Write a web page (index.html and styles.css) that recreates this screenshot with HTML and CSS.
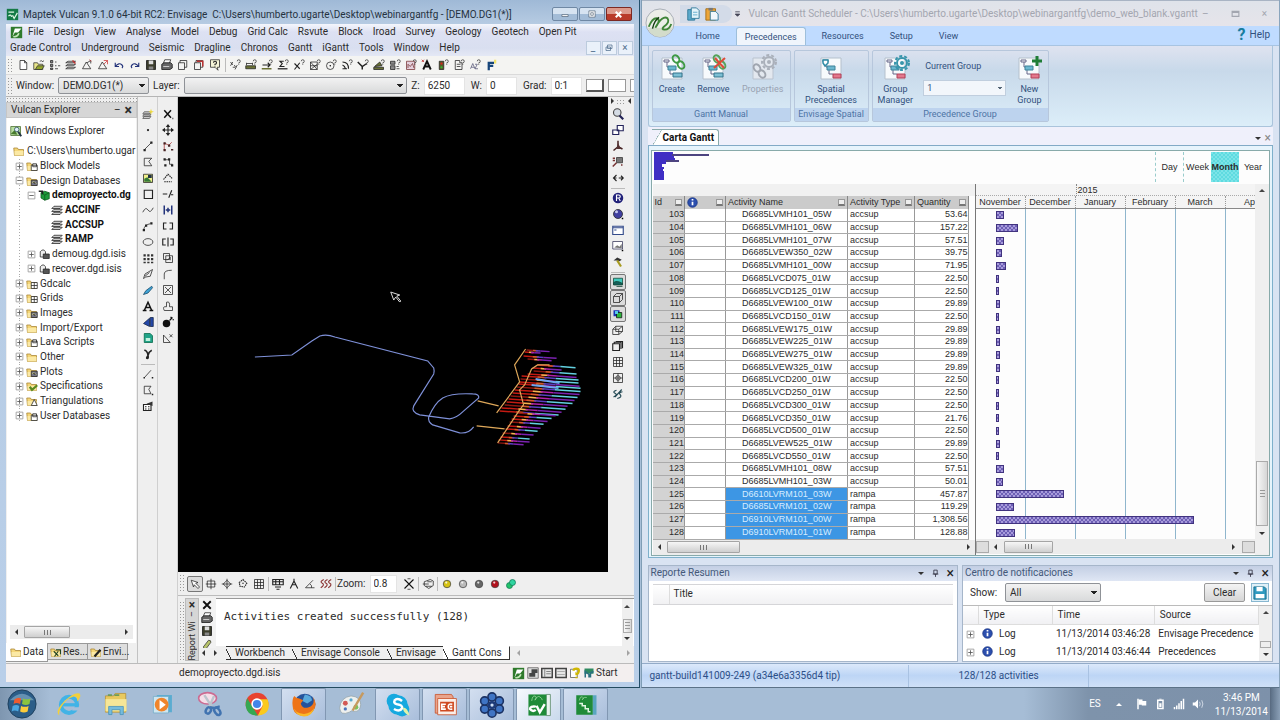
FILE: index.html
```html
<!DOCTYPE html>
<html lang="en">
<head>
  <meta charset="UTF-8">
  <meta name="viewport" content="width=device-width, initial-scale=1.0">
  <title>Vulcan Envisage and Gantt Scheduler</title>
  <link rel="stylesheet" href="styles.css">
</head>
<body>
  <div class="workspace">

    <!-- Envisage -->
    <section class="window envisage">
      <header class="titlebar">
        <i data-icon="vulcan" class="app-icon"></i>
        <span class="title">Maptek Vulcan 9.1.0 64-bit RC2: Envisage&nbsp; C:\Users\humberto.ugarte\Desktop\webinargantfg - [DEMO.DG1(*)]</span>
        <div class="caption">
          <button aria-label="Minimize"><i data-icon="capMin"></i></button>
          <button aria-label="Maximize"><i data-icon="capMax"></i></button>
          <button class="close" aria-label="Close"><i data-icon="capClose"></i></button>
        </div>
      </header>

      <div class="client">
        <nav class="menus">
          <div class="menu-row first">
            <i data-icon="sheet"></i>
            <button>File</button><button>Design</button><button>View</button><button>Analyse</button><button>Model</button><button>Debug</button><button>Grid Calc</button><button>Rsvute</button><button>Block</button><button>Iroad</button><button>Survey</button><button>Geology</button><button>Geotech</button><button>Open Pit</button>
          </div>
          <div class="menu-row">
            <button>Grade Control</button><button>Underground</button><button>Seismic</button><button>Dragline</button><button>Chronos</button><button>Gantt</button><button>iGantt</button><button>Tools</button><button>Window</button><button>Help</button>
            <div class="mdi">
              <button aria-label="Minimize document">_</button>
              <button aria-label="Restore document"><i data-icon="restore"></i></button>
              <button aria-label="Close document">×</button>
            </div>
          </div>
        </nav>

        <div class="toolbar top">
          <span class="grip"></span>
          <div class="tools" data-tools="new open props layers tri triRed undo redo save print copy copyRed help | xyq rule arrowq sumq xq meshq circq arcq branchq slopeq gridq chartq textq lightq noteq azq fq"></div>
        </div>

        <div class="toolbar fields">
          <span class="grip"></span>
          <label for="window-select">Window:</label>
          <select id="window-select" class="drop window-drop"><option>DEMO.DG1(*)</option></select>
          <label for="layer-select">Layer:</label>
          <select id="layer-select" class="drop layer-drop"><option></option></select>
          <label for="z">Z:</label><input id="z" value="6250" class="w-z">
          <label for="w">W:</label><input id="w" value="0" class="w-w">
          <label for="grad">Grad:</label><input id="grad" value="0:1" class="w-g">
          <span class="swatch dark"></span><span class="swatch"></span><span class="swatch cut"></span>
        </div>

        <div class="main">
          <aside class="explorer">
            <div class="dots"></div>
            <h2 class="pane-title">Vulcan Explorer <span>–</span><b>×</b></h2>
            <div class="tree">
              <a class="root" href="#"><i data-icon="explorer"></i>Windows Explorer</a>
              <ul id="tree"></ul>
              <div class="hscroll"><i class="arrow left"></i><span class="thumb"></span><i class="arrow right"></i></div>
            </div>
            <div class="pane-tabs">
              <button class="on"><i data-icon="folder"></i>Data</button>
              <button><i data-icon="folderMap"></i>Res...</button>
              <button><i data-icon="folderPen"></i>Envi...</button>
            </div>
          </aside>

          <div class="rail" data-tools="stack dot line poly image square curve arcs ellipse gridDots feather brush bigA flag3d sheetG gamma | lineDot polyDot form"></div>
          <div class="rail" data-tools="cross move nodeRed nodes nodesDash minusDiv fitH unlink unlinkBar copies corner boxX lasso bomb slopeX"></div>

          <div class="center">
            <div class="view">
              <div class="canvas">
                <svg id="model" viewBox="178 97 430 475" preserveAspectRatio="xMidYMid meet" aria-label="Mine design"></svg>
              </div>
              <div class="side">
                <div class="side-grip"><i class="arrow right"></i><span class="grip-h"></span><i class="arrow left"></i></div>
                <div class="rail" data-tools="zoomI boxes axes redbox swap | regist globe panel panelPic hammer | *terrain *cube *shade cubes stackBox grid3 gridC swirl"></div>
              </div>
            </div>

            <div class="toolbar bottom">
              <span class="grip"></span>
              <div class="tools" data-tools="*pointer snapA snapB snapC grid3 | keys compass angle waves |"></div>
              <label for="zoom">Zoom:</label><input id="zoom" value="0.8" class="w-zoom">
              <div class="tools" data-tools="crossDot | eye | ballY ballW ballG ballR balls"></div>
            </div>

            <div class="report">
              <span class="grip"></span>
              <div class="report-name"><b>×</b><span>Report Wi &nbsp;–</span></div>
              <div class="report-tools" data-tools="crossB print save clip"></div>
              <div class="report-main">
                <div class="console"><pre>Activities created successfully (128)</pre>
                  <div class="vscroll"><i class="arrow up"></i><span class="thumb"></span><i class="arrow down"></i></div>
                </div>
                <div class="sheet-tabs">
                  <i class="arrow left"></i><i class="arrow right"></i>
                  <button>Workbench</button><button>Envisage Console</button><button>Envisage</button><button class="on">Gantt Cons</button>
                  <i class="arrow left faint"></i><i class="arrow right faint last"></i>
                </div>
              </div>
            </div>
          </div>
        </div>

        <footer class="status">
          <span class="file">demoproyecto.dgd.isis</span>
          <div class="tools" data-tools="sheet printer2 panelL panelB helpY start"></div>
          <span>Start</span>
        </footer>
      </div>
    </section>

    <!-- Gantt Scheduler -->
    <section class="window scheduler">
      <header class="titlebar">
        <button class="orb" aria-label="Application menu"><i data-icon="orb"></i></button>
        <div class="quick"><i data-icon="paste"></i><i data-icon="paste2"></i></div>
        <i data-icon="quickMenu" class="quick-menu"></i>
        <span class="title">Vulcan Gantt Scheduler - C:\Users\humberto.ugarte\Desktop\webinargantfg\demo_web_blank.vgantt</span>
        <div class="caption">
          <button aria-label="Minimize">–</button><button aria-label="Maximize"><i data-icon="maxGrey"></i></button><button aria-label="Close">×</button>
        </div>
      </header>
      <nav class="ribbon-tabs">
        <button>Home</button><button class="on">Precedences</button><button>Resources</button><button>Setup</button><button>View</button>
        <a href="#"><b>?</b>Help</a>
      </nav>

      <div class="sched-body">
        <div class="ribbon">
          <div class="group manual">
            <div class="group-items">
              <button><i data-icon="rCreate"></i>Create</button>
              <button><i data-icon="rRemove"></i>Remove</button>
              <button disabled><i data-icon="rProps"></i>Properties</button>
            </div>
            <h3>Gantt Manual</h3>
          </div>
          <div class="group spatial">
            <div class="group-items">
              <button><i data-icon="rSpatial"></i>Spatial<br>Precedences</button>
            </div>
            <h3>Envisage Spatial</h3>
          </div>
          <div class="group prec">
            <div class="group-items">
              <button><i data-icon="rManager"></i>Group<br>Manager</button>
              <div class="current">
                <label for="current-group">Current Group</label>
                <select id="current-group"><option>1</option></select>
              </div>
              <button><i data-icon="rNew"></i>New<br>Group</button>
            </div>
            <h3>Precedence Group</h3>
          </div>
        </div>

        <div class="doc-tabs"><button>Carta Gantt</button><span class="doc-tools"><i class="arrow down"></i><b>×</b></span></div>

        <div class="doc">
          <div class="doc-inner">
            <div class="overview">
              <svg class="mini" viewBox="0 0 60 30" aria-hidden="true">
                <path fill="#3f2fc4" d="M0 0h19v4h1v2h1v2h-5v2h-4v2H8v3h2v2H9v2h1v9H0z"/>
                <path stroke="#4d4480" stroke-width="2" d="M18 3h37M12 9h13"/>
              </svg>
              <div class="scale"><button>Day</button><button>Week</button><button class="on">Month</button><button>Year</button></div>
            </div>
            <div class="gantt">
              <div class="grid-side">
                <div class="grid-gap"></div>
                <table>
                  <thead>
                    <tr><th class="c-id">Id<s></s></th><th class="c-info"><i data-icon="info"></i><s></s></th><th class="c-name">Activity Name<s></s></th><th class="c-type">Activity Type<s></s></th><th>Quantity<s></s></th></tr>
                  </thead>
                  <tbody id="rows"></tbody>
                </table>
                <div class="hscroll"><i class="arrow left"></i><span class="thumb"></span><i class="arrow right"></i></div>
              </div>
              <div class="chart-side">
                <div class="year"><span>2015</span></div>
                <div class="months"><span>November</span><span>December</span><span>January</span><span>February</span><span>March</span><span>Ap</span></div>
                <div class="bars" id="bars"></div>
                <div class="hscroll"><span class="box"></span><i class="arrow left"></i><span class="thumb"></span><i class="arrow right"></i><span class="box"></span></div>
              </div>
              <div class="vscroll"><i class="arrow up"></i><span class="thumb"></span><i class="arrow down"></i></div>
            </div>
          </div>
        </div>

        <div class="docks">
          <section class="dock resumen">
            <h2>Reporte Resumen <span><i class="arrow down"></i><i data-icon="pin"></i><b>×</b></span></h2>
            <div class="list-head"><span></span><span>Title</span></div>
          </section>
          <section class="dock notif">
            <h2>Centro de notificaciones <span><i class="arrow down"></i><i data-icon="pin"></i><b>×</b></span></h2>
            <div class="filter">
              <label for="show">Show:</label>
              <select id="show" class="drop"><option>All</option></select>
              <button class="clear">Clear</button>
              <button class="save" aria-label="Save"><i data-icon="saveBlue"></i></button>
            </div>
            <div class="log">
              <table>
                <thead><tr><th class="l-x"></th><th class="l-type">Type</th><th class="l-time">Time</th><th>Source</th></tr></thead>
                <tbody>
                  <tr><td><i data-icon="plus"></i></td><td><i data-icon="info"></i>Log</td><td>11/13/2014 03:46:28</td><td>Envisage Precedence</td></tr>
                  <tr><td><i data-icon="plus"></i></td><td><i data-icon="info"></i>Log</td><td>11/13/2014 03:46:44</td><td>Precedences</td></tr>
                </tbody>
              </table>
              <div class="vscroll"><i class="arrow up"></i><span class="thumb"></span><i class="arrow down"></i></div>
            </div>
          </section>
        </div>
      </div>

      <footer class="sched-status"><span>gantt-build141009-249 (a34e6a3356d4 tip)</span><span>128/128 activities</span><span></span></footer>
    </section>
  </div>

  <footer class="taskbar">
    <button class="start" aria-label="Start"><i data-icon="win"></i></button>
    <button aria-label="Internet Explorer"><i data-icon="ie"></i></button>
    <button aria-label="Files"><i data-icon="files"></i></button>
    <button aria-label="Media Player"><i data-icon="media"></i></button>
    <button aria-label="Snipping Tool"><i data-icon="snip"></i></button>
    <button aria-label="Chrome"><i data-icon="chrome"></i></button>
    <button class="open" aria-label="Firefox"><i data-icon="firefox"></i></button>
    <button aria-label="Paint"><i data-icon="paint"></i></button>
    <button class="open" aria-label="Skype"><i data-icon="skype"></i></button>
    <button class="open" aria-label="PowerPoint"><i data-icon="ppt"></i></button>
    <button class="open" aria-label="Meeting"><i data-icon="flower"></i></button>
    <button class="open active" aria-label="Vulcan"><i data-icon="vulcanBig"></i></button>
    <button class="open" aria-label="Vulcan Gantt"><i data-icon="ganttBig"></i></button>
    <div class="tray">
      <span>ES</span>
      <i class="arrow up"></i><i data-icon="tFlag"></i><i data-icon="tBattery"></i><i data-icon="tSignal"></i><i data-icon="tSound"></i>
      <time>3:46 PM<br>11/13/2014</time>
      <button class="peek" aria-label="Show desktop"></button>
    </div>
  </footer>

  <script src="script.js"></script>
</body>
</html>
```
FILE: styles.css
```css
* {
  box-sizing: border-box;
}

body {
  margin: 0;
  min-height: 100vh;
  display: flex;
  flex-direction: column;
  background: #a9c0d9;
  color: #2c2c2c;
  font-family: Roboto, "Open Sans", sans-serif;
  font-size: 10px;
  line-height: 14px;
  overflow: hidden;
}

button, input, select {
  font: inherit;
  color: inherit;
  margin: 0;
}

button {
  border: 0;
  padding: 0;
  background: none;
  white-space: nowrap;
}

a {
  color: inherit;
  text-decoration: none;
}

ul, h2, h3, pre {
  margin: 0;
  padding: 0;
  font-weight: normal;
  font-size: 10px;
}

i[data-icon], .tool {
  display: block;
  flex: none;
}

svg {
  display: block;
}

.workspace {
  flex: 1;
  display: grid;
  grid-template-columns: minmax(0, 1fr) minmax(0, 1fr);
  gap: 1px;
}

.window {
  display: flex;
  flex-direction: column;
}

.titlebar {
  display: flex;
  align-items: center;
}

.title {
  white-space: nowrap;
  flex: 1;
  min-width: 0;
}

/* arrows used by scroll bars, drop downs and handles */
.arrow {
  width: 0;
  height: 0;
  flex: none;
  border: 3px solid transparent;
}

.arrow.left { border-right-color: #333; border-left-width: 0; }
.arrow.right { border-left-color: #333; border-right-width: 0; }
.arrow.up { border-bottom-color: #444; border-top-width: 0; }
.arrow.down { border-top-color: #333; border-bottom-width: 0; }
.arrow.faint { opacity: .4; }

.drop {
  appearance: none;
  height: 17px;
  padding: 0 4px;
  border: 1px solid #8f9297;
  border-radius: 2px;
  background:
    linear-gradient(to bottom left, #222 50%, transparent 51%) right 6px center / 3px 3px no-repeat,
    linear-gradient(to bottom right, #222 50%, transparent 51%) right 3px center / 3px 3px no-repeat,
    linear-gradient(#f2f2f2, #d9dadb);
}

/* ---------- Envisage ---------- */

.envisage {
  padding: 0 5px 5px 6px;
  border-right: 1px solid #24506c;
  border-bottom: 1px solid #234a5e;
  background: linear-gradient(#9fb9d6, #b6cbe2 24px, #b9cfe9);
}

.envisage .titlebar {
  height: 24px;
  color: #26323f;
  padding-top: 5px;
}

.app-icon {
  margin-right: 4px;
}

.caption {
  display: flex;
}

.envisage .caption {
  gap: 1px;
  align-self: flex-start;
  margin: 2px 2px 0 0;
}

.envisage .caption button {
  width: 26px;
  height: 14px;
  display: grid;
  place-items: center;
  border: 1px solid #6f88a4;
  border-radius: 2px;
  background: linear-gradient(#d6e3f1 48%, #a3bcd7 52%);
}

.envisage .caption .close {
  border-color: #7c2a24;
  background: linear-gradient(#dc9a8d 48%, #b93a2a 52%);
}

.client {
  flex: 1;
  display: flex;
  flex-direction: column;
  background: #efefef;
}

.menus {
  background: linear-gradient(#f4f6fc, #dde1f3 8px, #d9dff0 24px, #e4e8f5);
}

.menu-row {
  display: flex;
  align-items: center;
  gap: 10px;
  height: 16px;
  padding-left: 4px;
}

.menu-row.first i {
  margin-right: -5px;
}

.mdi {
  display: flex;
  gap: 1px;
  margin: 0 1px 0 auto;
}

.mdi button {
  width: 15px;
  height: 14px;
  line-height: 10px;
  display: grid;
  place-items: center;
  border: 1px solid #bccbdd;
  background: #eaf1fa;
  color: #53708f;
}

.toolbar {
  display: flex;
  align-items: center;
  background: #efefef;
}

.tools {
  display: flex;
  align-items: center;
}

.tool {
  width: 16px;
  height: 16px;
  display: grid;
  place-items: center;
}

.tool.pressed {
  border: 1px solid #777;
  border-radius: 2px;
  background: #dcdcdc;
}

.sep {
  width: 1px;
  height: 14px;
  margin: 0 1px 0 2px;
  background: #bbb;
}

.grip {
  width: 5px;
  align-self: stretch;
  margin: 2px 4px 2px 1px;
  background: radial-gradient(circle, #999 1px, transparent 1px) 0 0 / 3px 3px;
}

.toolbar.top {
  height: 18px;
  background: #f4f4f2;
}

.toolbar.top .grip {
  margin-right: 3px;
}

.toolbar.fields {
  height: 23px;
  border-top: 1px solid #dadada;
  border-bottom: 1px solid #b5b5b5;
  gap: 4px;
}

.toolbar.fields .grip {
  margin-right: 0;
}

.toolbar input {
  height: 18px;
  border: 1px solid #e4e4e4;
  background: #fff;
  padding: 0 3px;
  min-width: 0;
}

.window-drop { width: 91px; }
.layer-drop { flex: 1; min-width: 0; }
.w-z { width: 41px; margin-right: 2px; }
.w-w { width: 31px; margin-right: 2px; }
.w-g { width: 31px; }
.w-zoom { width: 27px; margin: 0 4px; }

.swatch {
  width: 18px;
  height: 13px;
  background: #fff;
  border: 1px solid #999;
}

.swatch.dark {
  border-right: 2px solid #555;
  border-bottom: 2px solid #555;
}

.swatch.cut {
  width: 4px;
  border-right: 0;
}

.main {
  flex: 1;
  display: flex;
}

.explorer {
  width: 132px;
  display: flex;
  flex-direction: column;
  border-right: 1px solid #c2c2c2;
}

.dots, .grip-h {
  height: 5px;
  background: radial-gradient(circle, #999 1px, transparent 1px) 0 0 / 3px 3px;
}

.pane-title {
  display: flex;
  gap: 4px;
  height: 16px;
  padding: 0 4px;
  background: #d6d6d6;
  border: 1px solid #c6c6c6;
}

.pane-title span {
  margin-left: auto;
}

.pane-title b {
  font-size: 14px;
}

.tree {
  flex: 1;
  display: flex;
  flex-direction: column;
  margin: 0 1px;
  background: #fff;
  padding: 5px 3px 0;
  overflow: hidden;
}

.root {
  display: flex;
  gap: 3px;
  align-items: center;
  height: 16px;
  margin-bottom: 5px;
}

.tree ul {
  height: 279px;
  display: flex;
  flex-direction: column;
  list-style: none;
}

.tree li {
  flex: 1 1 0;
  display: flex;
  align-items: center;
  gap: 2px;
  white-space: nowrap;
  background: repeating-linear-gradient(#aaa 0 1px, transparent 1px 3px) 9px 0 / 1px 100% no-repeat;
}

.tree li:first-child {
  background: none;
  padding-left: 3px;
}

.tree .d1 { padding-left: 5px; }
.tree .d2 { padding-left: 17px; }
.tree .d3 { padding-left: 41px; }
.tree .strong { font-weight: bold; color: #111; }

.hscroll {
  display: flex;
  align-items: center;
  height: 14px;
  background: #ececec;
  padding: 0 5px;
}

.hscroll .thumb {
  height: 12px;
  border: 1px solid #a5a5a5;
  border-radius: 1px;
  background:
    repeating-linear-gradient(90deg, #777 0 1px, transparent 1px 3px) center / 7px 5px no-repeat,
    linear-gradient(#f6f6f6, #cfcfcf);
}

.tree .hscroll { margin: auto 0 4px; }
.tree .thumb { width: 46px; margin-left: 6px; }
.hscroll > .arrow.right { margin-left: auto; }

.pane-tabs {
  display: flex;
  align-items: flex-start;
  height: 20px;
}

.pane-tabs button {
  height: 17px;
  display: flex;
  gap: 1px;
  align-items: center;
  width: 40px;
  padding-left: 2px;
  border: 1px solid #999;
  border-width: 1px 1px 1px 0;
  background: #dedede;
}

.pane-tabs .on {
  height: 19px;
  width: 42px;
  padding-left: 4px;
  border-top: 0;
  background: #fff;
}

.rail {
  width: 20px;
  padding: 9px 0 0 1px;
  display: flex;
  flex-direction: column;
  align-items: center;
  border-right: 1px solid #cfcfcf;
}

.rail .sep {
  width: 14px;
  height: 1px;
  margin: 2px 0 1px;
}

.center {
  flex: 1;
  min-width: 0;
  display: flex;
  flex-direction: column;
}

.view {
  flex: 1;
  display: flex;
}

.canvas {
  flex: 1;
  min-width: 0;
  background: #000;
  display: flex;
}

.canvas svg {
  width: 100%;
}

.side {
  width: 26px;
}

.side-grip {
  height: 8px;
  display: flex;
  align-items: center;
  gap: 2px;
  padding: 0 3px;
}

.side-grip .grip-h {
  flex: 1;
}

.side .rail {
  padding: 1px 0 0;
  border: 0;
}

.toolbar.bottom {
  height: 24px;
  padding-left: 0;
  border-bottom: 1px solid #bbb;
}

.toolbar.bottom .grip {
  margin-right: 3px;
}

.toolbar.bottom .sep {
  margin: 0 1px;
}

.report {
  height: 67px;
  display: flex;
  padding: 2px 0 2px;
}

.report .grip {
  margin: 3px 1px 0 1px;
}

.report-name {
  width: 14px;
  display: flex;
  flex-direction: column;
  align-items: center;
  background: #d6d6d6;
  border: 1px solid #bbb;
}

.report-name b {
  font-size: 12px;
  line-height: 12px;
}

.report-name span {
  writing-mode: vertical-rl;
  transform: rotate(180deg);
  white-space: nowrap;
  font-size: 9px;
}

.report-tools {
  width: 17px;
  height: 50px;
  overflow: hidden;
  background: #f2f2f2;
}

.report-tools .tool {
  height: 13px;
}

.report-main {
  flex: 1;
  min-width: 0;
}

.console {
  height: 48px;
  display: flex;
  background: #fff;
  border-top: 1px solid #999;
}

.console pre {
  flex: 1;
  padding: 10px 8px;
  font: 11px/16px "DejaVu Sans Mono", "Liberation Mono", monospace;
}

.vscroll {
  display: flex;
  flex-direction: column;
  align-items: center;
  background: #efefef;
}

.vscroll .thumb {
  border: 1px solid #aaa;
  background:
    repeating-linear-gradient(#999 0 1px, transparent 1px 3px) center / 5px 7px no-repeat,
    linear-gradient(90deg, #f7f7f7, #d6d6d6);
}

.console .vscroll {
  width: 11px;
  margin-right: 1px;
  padding: 6px 0;
  justify-content: space-between;
}

.console .thumb {
  width: 9px;
  height: 14px;
  margin-top: 6px;
}

.sheet-tabs {
  display: flex;
  align-items: center;
  height: 14px;
  margin-left: -14px;
}

.sheet-tabs > .arrow {
  margin-right: 9px;
}

.sheet-tabs button {
  height: 14px;
  padding: 0 7px 0 9px;
  line-height: 12px;
  border-top: 1px solid #333;
  border-bottom: 1px solid #333;
  background: linear-gradient(64deg, transparent 4px, #333 4px, #333 5px, transparent 5px);
}

.sheet-tabs .on {
  border-top-color: #fff;
  border-right: 1px solid #333;
  background-color: #fff;
}

.sheet-tabs .faint { margin-left: 7px; }
.sheet-tabs .last { margin: 0 4px 0 auto; }

.status {
  display: flex;
  align-items: center;
  height: 19px;
  padding: 0 16px 0 173px;
  border-top: 1px solid #bbb;
  background: #f3efef;
}

.status .file {
  flex: 1;
}

.status .tool {
  width: 14px;
}

/* ---------- Gantt Scheduler ---------- */

.scheduler {
  background: #d9e3f2;
  border-left: 1px solid #7f9db5;
  border-right: 1px solid #8aa5bd;
  border-bottom: 1px solid #5b7288;
  color: #31507d;
}

.scheduler .titlebar {
  height: 26px;
  background: linear-gradient(#dfe3ea, #e6e4ea);
  border-top: 1px solid #a9b4c4;
  color: #a3a6b0;
}

.orb {
  width: 38px;
  height: 26px;
  padding-left: 3px;
  z-index: 1;
}

.orb i {
  margin-top: 7px;
}

.quick {
  display: flex;
  align-items: center;
  gap: 5px;
  height: 18px;
  width: 52px;
  padding-left: 6px;
  border-radius: 0 9px 9px 0;
  background: #d3dbe8;
}

.quick-menu {
  margin: 0 7px 0 1px;
}

.scheduler .title {
  min-width: 0;
}

.scheduler .caption {
  gap: 22px;
  padding-right: 12px;
}

.ribbon-tabs {
  height: 20px;
  display: flex;
  align-items: flex-end;
  padding: 0 9px 0 41px;
  background: #bfdbff;
  border-bottom: 1px solid #a8c4e2;
}

.ribbon-tabs button {
  height: 18px;
  padding: 0 13px;
  font-size: 9px;
}

.ribbon-tabs .on {
  padding: 0 8px;
  border: 1px solid #9ebfdb;
  border-bottom: 0;
  border-radius: 3px 3px 0 0;
  background: #f0f5fc;
  margin: 0 3px;
}

.ribbon-tabs a {
  margin-left: auto;
  display: flex;
  align-items: center;
  gap: 4px;
  height: 20px;
}

.ribbon-tabs b {
  color: #187d9e;
  font-size: 16px;
}

.sched-body {
  flex: 1;
  display: flex;
  flex-direction: column;
  padding: 0 6px;
}

.ribbon {
  height: 81px;
  display: flex;
  gap: 3px;
  padding: 4px 3px;
  border: 1px solid #aac4dc;
  border-top: 0;
  border-radius: 0 0 3px 3px;
  background: linear-gradient(#dfe3f0, #c8d9ea 25px, #dceef9);
  font-size: 9px;
}

.group {
  display: flex;
  flex-direction: column;
  border: 1px solid #b7c7dc;
  border-radius: 2px;
}

.manual { width: 139px; }
.spatial { width: 75px; }
.prec { width: 177px; }

.group-items {
  flex: 1;
  display: flex;
  padding: 4px 0 0;
  justify-content: space-around;
}

.group button {
  display: flex;
  flex-direction: column;
  align-items: center;
  line-height: 11px;
  height: 52px;
  text-align: center;
}

.group button i {
  margin-bottom: 3px;
}

.group button:disabled {
  color: #99a3b2;
}

.group h3 {
  height: 13px;
  font-size: 9px;
  line-height: 12px;
  text-align: center;
  white-space: nowrap;
  background: #bdd3ee;
  color: #4e74a5;
}

.current {
  display: flex;
  flex-direction: column;
  gap: 7px;
  padding-top: 4px;
  color: #31507d;
}

.current label {
  padding-left: 2px;
}

.current select {
  appearance: none;
  width: 83px;
  height: 16px;
  padding: 0 3px;
  border: 1px solid #c0cede;
  background:
    linear-gradient(to bottom left, #567 50%, transparent 51%) right 5px center / 2px 2px no-repeat,
    linear-gradient(to bottom right, #567 50%, transparent 51%) right 3px center / 2px 2px no-repeat,
    #f2f6fb;
}

.doc-tabs {
  display: flex;
  align-items: flex-end;
  height: 19px;
  background: #eff0fb;
  border-bottom: 1px solid #82aac6;
}

.doc-tabs button {
  height: 16px;
  margin-left: 4px;
  padding: 0 4px 0 11px;
  border-right: 1px solid #8aa;
  border-top: 1px solid #8aa;
  border-radius: 0 3px 0 0;
  background: linear-gradient(120deg, transparent 8px, #8aa 8px, #fff 9px);
  color: #111;
  font-weight: bold;
}

.doc-tools {
  margin-left: auto;
  display: flex;
  align-items: center;
  gap: 4px;
  padding-right: 2px;
}

.doc-tools b {
  color: #888;
  font-size: 12px;
  font-weight: normal;
}

.doc {
  border: 1px solid #7fb0cb;
  border-top: 0;
  background: #e7f4fc;
  padding: 4px 2px 1px;
}

.doc-inner {
  border: 1px solid #8aa;
  background: #fdfdfd;
  padding-left: 1px;
  font: 9px/12px "Liberation Sans", Arial, sans-serif;
  color: #2c2c2c;
}

.overview {
  display: flex;
  justify-content: space-between;
  height: 33px;
}

.mini {
  width: 60px;
  height: 30px;
  margin: 1px 0 0 1px;
}

.scale {
  display: flex;
  padding: 1px 2px 2px 0;
}

.scale button {
  width: 28px;
  border-left: 1px dashed #9cc;
}

.scale .on {
  font-weight: bold;
  border: 0;
  background: repeating-conic-gradient(#5fdbe0 0 25%, #7ce4e8 0 50%) 0 0 / 4px 4px;
}

.scale button:last-child {
  border: 0;
}

.gantt {
  display: flex;
}

.grid-side {
  width: 322px;
}

.grid-gap {
  height: 12px;
  background: #f1f1f1;
}

.grid-side table {
  width: 316px;
  border-collapse: collapse;
  table-layout: fixed;
}

.grid-side th {
  height: 13px;
  padding: 0 2px;
  font-weight: normal;
  text-align: left;
  white-space: nowrap;
  background: #cbcbcb;
  border-right: 1px solid #888;
  line-height: 11px;
}

.grid-side th s {
  float: right;
  width: 7px;
  height: 7px;
  margin-top: 2px;
  border: 1px solid #999;
  border-bottom: 2px solid #777;
  background: #eee;
}

.grid-side th i {
  float: left;
}

.c-id { width: 32px; }
.c-info { width: 41px; }
.c-name { width: 122px; }
.c-type { width: 67px; }

#rows {
  height: 330px;
}

#rows td {
  padding: 0 2px;
  line-height: 11px;
  border-right: 1px solid #999;
  border-bottom: 1px solid #aaa;
  white-space: nowrap;
  background: #fff;
}

#rows td:first-child {
  text-align: right;
  background: #d3d3d3;
  padding: 0;
}

#rows td:nth-child(3) {
  padding-left: 16px;
}

#rows td:last-child {
  text-align: right;
  padding: 0;
}

#rows .picked td:nth-child(3) {
  background: #3d96e4;
  color: #d7ecff;
}

.gantt .hscroll {
  height: 15px;
}

.grid-side .thumb {
  width: 73px;
  margin-left: 6px;
}

.chart-side {
  flex: 1;
  min-width: 0;
  border-left: 1px solid #777;
}

.year {
  height: 12px;
  background: #f4f4f4;
  border-bottom: 1px dotted #aaa;
}

.year span {
  display: block;
  margin-left: 100px;
  border-left: 1px dotted #888;
  padding-left: 1px;
}

.months {
  display: flex;
  height: 13px;
  overflow: hidden;
  background: #f4f4f4;
  border-bottom: 1px solid #888;
}

.months span {
  flex: 0 0 50px;
  text-align: center;
  border-right: 1px dotted #999;
}

.months span:last-child {
  flex: 1;
  min-width: 0;
  text-align: right;
  border: 0;
}

.bars {
  height: 330px;
  display: flex;
  flex-direction: column;
  padding-left: 20px;
  background: repeating-linear-gradient(90deg, transparent 0 49px, #8fb6cd 49px 50px);
}

.bars span {
  flex: 1 1 0;
  display: flex;
  align-items: center;
}

.bars b {
  height: 8px;
  border: 1px solid #41337f;
  background: repeating-conic-gradient(#6d5fb5 0 25%, #a79bdb 0 50%) 0 0 / 4px 4px;
}

.chart-side .hscroll {
  padding: 0;
}

.chart-side .box {
  width: 13px;
  height: 12px;
  border: 1px solid #aaa;
  background: #ddd;
}

.chart-side .box:last-child { margin-left: 7px; }
.chart-side .box + .arrow { margin-left: 5px; }
.chart-side .thumb { width: 49px; margin-left: 7px; }

.gantt > .vscroll {
  width: 14px;
  padding: 5px 0 20px;
}

.gantt > .vscroll .thumb {
  width: 12px;
  height: 65px;
  margin-top: auto;
  margin-bottom: 6px;
}

.docks {
  flex: 1;
  display: flex;
  gap: 4px;
  padding: 7px 0 1px;
  color: #2c2c2c;
}

.dock {
  background: #fff;
  border: 1px solid #a6b6ca;
}

.resumen {
  flex: 1;
}

.notif {
  width: 311px;
}

.dock h2 {
  height: 15px;
  display: flex;
  justify-content: space-between;
  padding: 0 3px 0 2px;
  background: linear-gradient(#c3cfe4, #dfe6f4);
  color: #44597a;
}

.dock h2 span {
  display: flex;
  align-items: center;
  gap: 7px;
}

.dock h2 b {
  font-size: 14px;
  font-weight: normal;
  color: #222;
}

.list-head {
  display: flex;
  height: 21px;
  margin: 3px 4px 0;
  border: 1px solid #d5d5d8;
  border-width: 1px 0;
  background: linear-gradient(#fff, #f1f1f3);
  line-height: 18px;
}

.list-head span:first-child {
  width: 17px;
  border-right: 1px solid #ddd;
}

.list-head span:last-child {
  padding-left: 4px;
}

.filter {
  display: flex;
  align-items: center;
  height: 24px;
  padding: 0 3px 0 7px;
}

.filter .drop {
  width: 96px;
  height: 19px;
  margin-left: 8px;
}

.clear {
  width: 41px;
  height: 19px;
  margin: 0 6px 0 auto;
  border: 1px solid #999;
  border-radius: 2px;
  background: linear-gradient(#f4f4f4, #d6d6d6);
}

.filter .save {
  width: 18px;
  height: 19px;
  display: grid;
  place-items: center;
  border: 1px solid #88b7d0;
  background: #dff0f8;
}

.log {
  display: flex;
  border-top: 1px solid #bbb;
}

.log table {
  flex: 1;
  border-collapse: collapse;
  table-layout: fixed;
}

.log th {
  height: 19px;
  padding: 0 5px;
  font-weight: normal;
  text-align: left;
  border-right: 1px solid #ddd;
  border-bottom: 1px solid #ddd;
  background: linear-gradient(#fff, #f0f0f3);
}

.log td {
  height: 18px;
  padding: 0 4px;
  white-space: nowrap;
}

.log td i {
  float: left;
}

.log td svg {
  margin-top: 1px;
}

.log td:nth-child(1) {
  padding: 0 3px;
}

.log td:nth-child(2) i {
  margin-right: 6px;
}

.l-x { width: 14px; }
.l-type { width: 74px; }
.l-time { width: 98px; }

.log .vscroll {
  width: 13px;
  padding: 5px 0;
}

.log .thumb {
  width: 11px;
  height: 7px;
  margin: auto 0 5px;
  background: #eee;
}

.sched-status {
  height: 24px;
  display: flex;
  align-items: center;
  border-top: 1px solid #93abc8;
  background: linear-gradient(#dce9fb, #bdd5f5 50%, #cfe0f7);
  color: #2d4f87;
}

.sched-status span {
  height: 22px;
  line-height: 22px;
  padding-left: 8px;
  border-right: 1px solid #a9c2e2;
}

.sched-status span:first-child { width: 267px; }
.sched-status span:nth-child(2) { width: 180px; padding-left: 50px; }
.sched-status span:last-child { border: 0; }

/* ---------- Taskbar ---------- */

.taskbar {
  height: 32px;
  display: flex;
  gap: 2px;
  background: linear-gradient(90deg, #7e96b0, #a6bdd6 50px, #a6bdd6 80%, #7e93ab 85%, #7d91aa);
}

.taskbar > button {
  width: 45px;
  display: grid;
  place-items: center;
}

.taskbar .start {
  width: 44px;
}

.taskbar .open {
  border: 1px solid #8197b2;
  border-bottom: 0;
  border-radius: 2px 2px 0 0;
  background: linear-gradient(135deg, #d3dff0, #a9bedb);
}

.taskbar .active {
  background: linear-gradient(135deg, #f6f9fd, #c9d9ec);
}

.tray {
  margin-left: auto;
  display: flex;
  align-items: center;
  gap: 7px;
  color: #fff;
}

.tray span {
  margin-right: 8px;
}

.tray .arrow.up {
  border-bottom-color: #fff;
  margin-right: 6px;
}

.tray time {
  margin-left: 4px;
  text-align: center;
  padding-top: 2px;
}

.peek {
  align-self: stretch;
  width: 10px;
  margin-left: -5px;
  border-left: 1px solid #5a6c82;
  background: linear-gradient(90deg, #5d7188, #8a9fb6);
}
```
FILE: script.js
```js
// icons are drawn on a 16 x 16 box unless a size is given: [width, height, viewBox side, markup]
const K = 'stroke="#222" fill="none"';
const q = '<path stroke="#333" fill="none" d="M11 3q0-2 2-2t2 2-2 2v1M13 7v1"/>';
const folder = '<path d="M1 4h5l1 2h7v8H2z" fill="#f5d779" stroke="#a58230"/><path d="M2 8h12v6H2z" fill="#fbe9a5"/>';
const tree = '<path d="M3 3h20v21H3z" fill="#f7fafc" stroke="#b5c0cc"/><path d="M5 5h5v2H5zM8 7v5h3M11 12v7h4" stroke="#668" fill="none"/><path d="M9 11h8v4H9z" fill="#6bb7cf" stroke="#3c8299"/><path d="M14 18h9v4h-9z" fill="#7cbfd4" stroke="#35758c"/>';
const treeRed = tree.replace('M14 18h9v4h-9z" fill="#7cbfd4" stroke="#35758c"', 'M15 19h8v4h-8z" fill="#e4788c" stroke="#b04058"');
const chain = (c) => `<g fill="none" stroke="${c}" stroke-width="2"><ellipse cx="17" cy="4" rx="3" ry="4" transform="rotate(-35 17 4)"/><ellipse cx="22" cy="10" rx="3" ry="4" transform="rotate(-35 22 10)"/></g>`;
const gear = (x, y, c) => `<circle cx="${x}" cy="${y}" r="5" fill="none" stroke="${c}" stroke-width="2"/><circle cx="${x}" cy="${y}" r="7" fill="none" stroke="${c}" stroke-width="2" stroke-dasharray="3 2"/><circle cx="${x}" cy="${y}" r="2" fill="${c}"/>`;
const ball = (c) => `<circle cx="8" cy="8" r="5" fill="${c}" stroke="#444"/><circle cx="7" cy="6" r="1.5" fill="#fff" opacity=".8"/>`;

const icons = {
  vulcan: '<path fill="#147a46" d="M1 1h14v14H1z"/><path d="M3 10q3-3 4 1M8 9l2 4 4-7M3 5h7" stroke="#dff5e4" stroke-width="1.5" fill="none"/>',
  sheet: '<path fill="#2f7a2c" d="M1 1h14v14H1z"/><path d="M6 3h8l-4 5H6l-3 5 2-7z" fill="#fff"/><path d="M4 13q5 1 7-4" stroke="#c5e7b8" stroke-width="2" fill="none"/>',
  capMin: '<path d="M3 9h10v3H3z" fill="#fff" stroke="#456"/>',
  capMax: '<path d="M3 3h10v10H3zM6 6h4v4H6z" fill="#fff" stroke="#456"/>',
  capClose: '<path d="M4 4l8 8M12 4l-8 8" stroke="#fff" stroke-width="3"/>',
  restore: '<path d="M5 2h9v7H5zM2 6h9v7H2z" fill="#eaf1fa" stroke="#53708f" stroke-width="1.5"/>',
  maxGrey: '<path d="M2 4h12v9H2zM2 6h12" fill="none" stroke="#a3a6b0" stroke-width="2"/>',
  new: `<path d="M4 2h6l3 3v9H4zM10 2v3h3" stroke="#222" fill="#fff"/>`,
  open: '<path d="M1 14V5h5l1 2h6v7z" fill="#e9e68a" stroke="#333"/><path d="M3 14l3-5h9l-3 5z" fill="#93a52c" stroke="#333"/><path d="M9 3q3-2 4 1l1-2" stroke="#333" fill="none"/>',
  props: `<path d="M2 2h3v3H2zM2 7h3v3H2zM2 12h3v2H2z" fill="#888" stroke="#222"/><path d="M8 4h2M8 9h2M12 9h3M8 13h4" ${K}/>`,
  layers: `<path d="M4 3h10l-3 2H1zM4 7h10l-3 2H1zM4 11h10l-3 2H1z" ${K}/><path d="M10 2l4 4" stroke="#b33" stroke-width="2"/>`,
  tri: `<path d="M2 13L7 4l6 9zM8 5l5-3v4" ${K}/><path d="M11 1l3 2" stroke="#b33"/>`,
  triRed: `<path d="M2 13L7 4l6 9z" ${K}/><path d="M9 2h5v5M9 7l5-5" stroke="#c33" fill="none"/>`,
  undo: '<path d="M3 5v5h5M3 10q5-6 9-2 2 2 0 4" stroke="#23337a" stroke-width="1.5" fill="none"/>',
  redo: '<path d="M13 5v5H8M13 10Q8 4 4 8q-2 2 0 4" stroke="#23337a" stroke-width="1.5" fill="none"/>',
  save: '<path d="M2 2h12v12H2z" fill="#3b3d2b" stroke="#111"/><path d="M5 2h6v5H5z" fill="#ddd"/><path d="M5 10h6v4H5z" fill="#888"/>',
  print: '<path d="M5 1h8l-2 5H3z" fill="#fff" stroke="#222"/><path d="M1 7l3-2h9l2 2v5l-3 2H1z" fill="#666" stroke="#111"/><path d="M3 10h8" stroke="#eee"/>',
  copy: `<path d="M4 5V2h9v9h-3M2 5h8v9H2z" ${K}/>`,
  copyRed: '<path d="M4 5V2h9v9h-3M2 5h8v9H2z" stroke="#222" fill="none"/><path d="M5 3h8v3M13 3v7" stroke="#b33" stroke-width="2" fill="none"/>',
  help: '<path d="M2 1h12v10h-3l1 4-4-4H2z" fill="#f6f5d8" stroke="#222"/><path d="M6 5q0-2 2-2t2 2-2 2v1M8 9v1" stroke="#222" stroke-width="1.5" fill="none"/>',
  xyq: `<path d="M2 4l3 4M5 4l-3 5M7 8l2 3M11 8l-3 6M5 11h3" ${K}/>${q}`,
  rule: `<path d="M1 9h13v4H1z" fill="#6a7134" stroke="#222"/><path d="M2 6h8M2 5v3M10 5v3" ${K}/>${q}`,
  arrowq: `<path d="M1 12h13v2H1z" fill="#6a7134"/><path d="M2 8h9M9 5l3 3-3 3" stroke="#222" stroke-width="1.5" fill="none"/>${q}`,
  sumq: `<path d="M1 12h13v2H1z" fill="#444"/><path d="M9 3H4l3 3-3 4h6" stroke="#222" fill="none" stroke-width="1.5"/>${q}`,
  xq: `<path d="M2 6l7 7M9 5l-7 9" stroke="#222" stroke-width="1.5"/>${q}`,
  meshq: `<path d="M2 4h9v10H2zM2 4l9 10M11 7l-9 7M2 9h9" ${K}/>${q}`,
  circq: `<circle cx="7" cy="9" r="5" ${K}/><circle cx="7" cy="9" r="1"/>${q}`,
  arcq: `<path d="M2 4q8 0 8 9M2 8q3 1 4 5M2 13h6" ${K} stroke-width="1.5"/>${q}`,
  branchq: `<path d="M1 4l6 6 6-4M7 10v4" stroke="#222" stroke-width="2" fill="none"/>${q}`,
  slopeq: `<path d="M1 14h13v-3H1zM2 10L9 4l3 5z" fill="#6a7134" stroke="#222"/>${q}`,
  gridq: `<path d="M2 3h6v4H2zM2 9h6v5H2z" fill="#888" stroke="#222"/><path d="M10 13h4M10 10h3" ${K}/>${q}`,
  chartq: `<path d="M2 3h11v11H2zM4 12V7l3 3 3-4 2 6" stroke="#733" fill="#e4d0dc"/>${q}`,
  textq: `<path d="M3 14L8 3l5 11M5 10h6" stroke="#111" stroke-width="2.5" fill="none"/><path d="M1 1l3 3M4 1L1 4" stroke="#b22"/>`,
  lightq: `<path d="M3 3h6v11H3z" fill="#5c5a2a" stroke="#222"/><circle cx="6" cy="6" r="1.5" fill="#d22"/><circle cx="6" cy="11" r="1.5" fill="#3b3"/>${q}`,
  noteq: `<path d="M3 2h6v3h3v9H3zM5 7h5M5 10h5" ${K}/>${q}`,
  azq: `<path d="M2 13l3-7 3 7M3 11h4M8 7h3l-3 6h4" stroke="#557" fill="none"/>${q}`,
  fq: '<path d="M5 15V5h7M5 9h6" stroke="#17457a" stroke-width="3" fill="none"/><path d="M12 1h3v5h-3z" fill="#f4e36b"/>',
  folder,
  folderMap: folder + '<path d="M5 7l6 6M11 7l-5 7M8 5h6v6" stroke="#242" stroke-width="1.5" fill="none"/>',
  folderPen: folder + '<path d="M6 14L14 5" stroke="#222" stroke-width="3"/>',
  folderBox: folder + '<path d="M7 7h8v7H7zM9 5h5v4H9z" fill="#fff" stroke="#222"/>',
  folderGrid: folder + '<path d="M7 6h8v8H7zM11 6v8M7 10h8" fill="#fff" stroke="#222"/>',
  folderDark: folder + '<path d="M7 7h8v7H7z" fill="#778" stroke="#222"/><path d="M8 10l3-1 3 3" stroke="#dd9"/>',
  folderTri: folder + '<path d="M7 14l4-8 4 8z" fill="#fff" stroke="#222"/>',
  folderGreen: folder + '<path d="M5 9l3 4 7-6" stroke="#5a8a20" stroke-width="3" fill="none"/>',
  green: '<path d="M4 5l5-2 6 2v8l-6 2-5-3z" fill="#1d9a3a" stroke="#0b5a1c"/><path d="M4 5l5 3 6-3M9 8v7" stroke="#0b5a1c" fill="none"/><path d="M1 3h5v4" stroke="#222" fill="none" stroke-width="2"/>',
  db: '<path d="M3 5q4-5 7 0v7H3z" fill="#eee" stroke="#222"/><path d="M7 8h8v6H7z" fill="#555" stroke="#222"/>',
  sheets: `<path d="M4 3h11l-3 3H1zM4 7h11l-3 3H1zM4 11h11l-3 3H1z" fill="#ccc" stroke="#222"/>`,
  plus: '<path d="M2 2h12v12H2z" fill="#fff" stroke="#999" stroke-width="1.5"/><path d="M4 8h8M8 4v8" stroke="#555" stroke-width="1.5"/>',
  minus: '<path d="M2 2h12v12H2z" fill="#fff" stroke="#999" stroke-width="1.5"/><path d="M4 8h8" stroke="#555" stroke-width="1.5"/>',
  explorer: '<path d="M1 2h13v12H1z" fill="#b9dfa0" stroke="#476b2c"/><path d="M1 12l5-5 4 6z" fill="#477a2c"/><circle cx="9" cy="6" r="3" fill="#dff0fa" stroke="#245"/><path d="M11 9l4 6" stroke="#234" stroke-width="2.5"/>',
  stack: '<path d="M3 5h9l-2 3H1zM3 8h9l-2 3H1zM3 11h9l-2 3H1z" fill="#ccc" stroke="#555"/><path d="M12 1l1 3 3 1-3 1-1 3-1-3-2-1 2-1z" fill="#eedb42"/>',
  dot: '<circle cx="8" cy="8" r="1.5" fill="#222"/>',
  line: `<path d="M3 13L13 3" ${K}/><path d="M2 12h3v3H2zM11 2h3v3h-3z" fill="#222"/>`,
  poly: `<path d="M3 3h10l-4 4 4 6H3z" ${K}/>`,
  image: '<path d="M2 3h12v11H2z" fill="#f0ef8b" stroke="#222"/><path d="M3 13V9l4-2 6 6z" fill="#367a36"/><path d="M8 4h5v4H8z" fill="#234"/>',
  square: `<path d="M3 3h11v11H3z" ${K} stroke-width="1.5"/>`,
  curve: `<path d="M1 11q4-8 7-3t7-3" ${K}/>`,
  arcs: '<path d="M2 14q1-8 9-9" stroke="#222" fill="none"/><path d="M1 12h3v3H1zM4 6h3v3H4zM11 3h3v3h-3z" fill="#222"/>',
  ellipse: `<ellipse cx="8" cy="8" rx="6.5" ry="4.5" ${K}/>`,
  gridDots: '<path d="M2 3h3v3H2zM7 3h3v3H7zM12 3h3v3h-3zM2 8h3v3H2zM7 8h3v3H7zM12 8h3v3h-3zM2 13h3v2H2zM7 13h3v2H7zM12 13h3v2h-3z" fill="#333"/>',
  feather: `<path d="M2 14l2-6 10-6-3 9-6 1zM4 11l6-5" ${K}/>`,
  brush: '<path d="M2 14l3-5 8-6 1 2-6 7z" fill="#3fa4d6" stroke="#146"/>',
  bigA: '<path d="M3 14L8 3l5 11M5 10h6M1 14h5M10 14h5" stroke="#111" stroke-width="2" fill="none"/>',
  flag3d: '<path d="M2 10l8-7v11zM11 2h4v12h-4z" fill="#2347a8" stroke="#124"/>',
  sheetG: '<path d="M3 2h8l3 3v9H3z" fill="#1fa287" stroke="#064"/><path d="M5 8h6v4H5z" fill="#bff0dc"/>',
  gamma: '<path d="M3 3q4 0 5 7M13 3q-4 2-5 7-3 4-1 4t1-4" stroke="#222" stroke-width="2" fill="none"/>',
  lineDot: `<path d="M3 13L12 3" ${K}/><path d="M2 12h2v2H2zM13 12h2v2h-2z" fill="#222"/>`,
  polyDot: `<path d="M3 3h9l-3 4 3 6H3z" ${K}/><path d="M13 13h2v2h-2z" fill="#222"/>`,
  form: '<path d="M2 6h10v8H2zM4 9h2M4 12h2M8 9h2M8 12h2" stroke="#222" fill="#fff" stroke-width="1.5"/><path d="M6 5l8-3v6" fill="#333"/>',
  cross: '<path d="M3 3l9 10M12 3L3 13" stroke="#111" stroke-width="2"/><path d="M14 13h1v2h-1z"/>',
  crossB: '<path d="M3 3l10 10M13 3L3 13" stroke="#111" stroke-width="2.5"/>',
  crossDot: `<path d="M2 2l12 12M14 2L2 14" stroke="#111" stroke-width="1.5"/><path d="M6 1h4M6 15h4" ${K}/>`,
  move: '<path d="M8 2v12M2 8h12" stroke="#222" stroke-width="1.5"/><path d="M8 0l3 4H5zM8 16l3-4H5zM0 8l4-3v6zM16 8l-4-3v6z" fill="#222"/>',
  nodeRed: '<path d="M3 14V4l6 3 4-4" stroke="#a33" fill="none"/><path d="M2 3h3v3H2zM8 6h3v3H8zM2 12h3v3H2zM12 12h3v2h-3z" fill="#422"/>',
  nodes: '<path d="M3 5h7v6h4" stroke="#222" fill="none"/><path d="M2 3h3v3H2zM8 3h3v3H8zM3 11h3v3H3zM12 11h3v3h-3z" fill="#222"/>',
  nodesDash: '<path d="M2 10l6-7 6 6M3 13h10" stroke="#222" fill="none" stroke-dasharray="2 1" stroke-width="1.5"/>',
  minusDiv: '<path d="M1 8h6M9 13l4-10M12 9h3" stroke="#222" stroke-width="1.5"/>',
  fitH: '<path d="M3 2v12M13 2v12M5 8h6M8 5v6" stroke="#22337a" stroke-width="2"/>',
  unlink: `<path d="M6 4H2v8h4M10 4h4v8h-4" ${K} stroke-width="1.5"/>`,
  unlinkBar: `<path d="M5 4H1v8h4M11 4h4v8h-4M8 2v12" ${K} stroke-width="1.5"/>`,
  copies: `<path d="M2 2h8v8H2zM5 5h9v9H5zM7 11l4-4v4" ${K}/>`,
  corner: `<path d="M3 15V8q0-5 10-5" ${K}/>`,
  boxX: `<path d="M2 2h12v12H2zM4 4l8 8M12 4l-8 8" ${K}/>`,
  lasso: `<path d="M6 3q5-2 4 6h4v5H3q-3-6 3-5z" ${K}/>`,
  bomb: '<circle cx="6" cy="10" r="5" fill="#111"/><path d="M10 6l4-4M12 1v2M14 5h2" stroke="#111" stroke-width="1.5"/>',
  slopeX: `<path d="M2 14V4l9 10zM10 3l4 4M14 3l-4 4" ${K}/>`,
  zoomI: '<circle cx="7" cy="6" r="5" fill="#d4dbe4" stroke="#444" stroke-width="1.5"/><path d="M10 10l5 5" stroke="#225" stroke-width="3"/>',
  boxes: '<path d="M7 2h8v7H7zM1 8h8v6H1z" fill="#fff" stroke="#22225a" stroke-width="1.5"/>',
  axes: '<path d="M8 1v8l6 3M8 9l-6 5" stroke="#422" stroke-width="2" fill="none"/><path d="M8 4l4 8H6z" fill="#533"/>',
  redbox: '<path d="M6 2h8v7H6z" fill="#777" stroke="#333"/><path d="M6 9l-5 5M1 3h3M1 6h3M12 12h2" stroke="#733" stroke-width="2"/>',
  swap: '<path d="M6 4L2 8l4 4M2 8h4M9 8h5M12 5l3 3-3 3" stroke="#222" fill="none" stroke-width="1.5"/>',
  regist: '<circle cx="8" cy="8" r="7" fill="#22227a"/><path d="M6 12V4h3q2 0 2 2t-2 2H6M9 8l2 4" stroke="#fff" stroke-width="1.5" fill="none"/>',
  globe: '<circle cx="8" cy="8" r="6" fill="#4140a0" stroke="#222"/><circle cx="6" cy="5" r="2" fill="#c6c8ee"/><path d="M13 13h2v2h-2z"/>',
  panel: '<path d="M1 3h14v11H1zM1 5h14M3 8h3" fill="#fff" stroke="#334a8a" stroke-width="1.5"/>',
  panelPic: '<path d="M1 2h13v10H1z" fill="#fff" stroke="#335"/><path d="M3 10l4-3 3 2 3-4v6z" fill="#777"/><path d="M13 13h2v2h-2z"/>',
  hammer: '<path d="M2 6l5-4 6 3-3 2-4-1z" fill="#333"/><path d="M7 6l5 8" stroke="#a89b20" stroke-width="3"/>',
  terrain: '<path d="M2 3h12v8H2z" fill="#40c9bd" stroke="#143"/><path d="M2 9q4-4 12 1v2H2zM6 14h8" fill="#15605a" stroke="#143"/>',
  cube: `<path d="M2 6h8v8H2zM2 6l4-4h8v8l-4 4M10 6l4-4" ${K}/>`,
  shade: '<path d="M2 3h8v8H2z" fill="#1730b4"/><path d="M6 6h7v7H6z" fill="#2cb53b" stroke="#111"/><path d="M4 4h4v4H4z" fill="#58c9e8"/>',
  cubes: `<path d="M1 7h8v7H1zM5 3h9v7H5zM1 7l4-4M9 7l5-4M9 14l5-4" ${K}/>`,
  stackBox: `<path d="M1 5h9v9H1zM3 5V3h9v9M5 3l1-1h8v9" ${K} stroke-width="1.5"/>`,
  grid3: `<path d="M2 2h12v12H2zM6 2v12M10 2v12M2 6h12M2 10h12" ${K}/>`,
  gridC: `<path d="M2 2h12v12H2zM2 8h12M8 2v12" ${K}/><circle cx="8" cy="8" r="3" ${K}/>`,
  swirl: '<path d="M6 3q-6 2-2 4t-2 5M14 5q-6 1-3 4t-4 5M13 2L4 12" stroke="#254a55" stroke-width="1.5" fill="none"/>',
  pointer: `<path d="M3 3l9 3-3 1 5 5-2 2-5-5-1 3z" fill="#fff" stroke="#222"/>`,
  snapA: `<path d="M3 4h10v8H3zM8 1v14M1 8h14" ${K}/>`,
  snapB: `<path d="M8 3l5 5-5 5-5-5zM8 1v14M1 8h14" ${K}/>`,
  snapC: `<path d="M8 2l5 5-3 5-6-1-1-5zM7 7h3" ${K} stroke-dasharray="2 1" stroke-width="1.5"/><path d="M10 13h4"/>`,
  keys: `<path d="M1 2h14v7H1zM5 2v7M10 2v7M1 5h14M4 12h8M6 15h4" ${K} stroke-width="1.5"/>`,
  compass: `<path d="M3 14L8 4l5 10M5 9h6M8 1v3" stroke="#222" stroke-width="1.5" fill="none"/>`,
  angle: `<path d="M12 3L2 13h12M8 8q3 2 2 5" ${K}/>`,
  waves: '<path d="M5 2q-6 3-2 5t-2 6M10 2q-6 3-2 5t-2 6M15 2q-6 3-2 5t-2 6" stroke="#8a3333" fill="none" stroke-width="1.5"/>',
  eye: `<path d="M3 5l8-3 4 2v6l-6 4-6-4zM1 8h8M5 11h8M7 5h6" ${K}/>`,
  ballY: ball('#d6c313'), ballW: ball('#bbb'), ballG: ball('#666'), ballR: ball('#b3101c'),
  balls: '<circle cx="6" cy="10" r="4" fill="#22c46a" stroke="#175"/><circle cx="10" cy="6" r="4" fill="#2fd4a0" stroke="#175"/>',
  clip: '<path d="M3 12L10 3q4 0 3 3l-6 8q-3 1-4-2z" fill="#b7c36a" stroke="#333"/>',
  printer2: '<path d="M1 1h14v14H1z" fill="#ddd" stroke="#555"/><path d="M3 8h8v5H3zM6 3h8v5H6z" fill="#444"/>',
  panelL: '<path d="M1 2h14v12H1z" fill="#e6e6e6" stroke="#444" stroke-width="2"/><path d="M5 3v10M7 6h6M7 9h6" stroke="#666"/>',
  panelB: '<path d="M1 2h14v12H1z" fill="#e6e6e6" stroke="#444" stroke-width="2"/><path d="M3 6h10M3 10h10" stroke="#999"/>',
  helpY: '<path d="M2 3h9v11H2z" fill="#fff" stroke="#555"/><path d="M6 5q0-3 4-3t3 4-3 3v2M10 13v2" stroke="#d1b800" stroke-width="3" fill="none"/>',
  start: '<path d="M2 2h12v7H2z" fill="#2f8a60"/><path d="M3 14V6l5 4v4M10 14V8l4-2" stroke="#2a6f80" stroke-width="2" fill="none"/>',
  info: '<circle cx="8" cy="8" r="7" fill="#2c4fae" stroke="#16307c"/><path d="M8 7v5M8 3v2" stroke="#fff" stroke-width="2.5"/>',
  pin: '<path d="M5 2h6v7H5zM3 9h10M8 9v5" stroke="#334" stroke-width="1.5" fill="none"/>',
  saveBlue: '<path d="M1 1h12l2 2v12H1z" fill="#2f9ac0" stroke="#176d8c"/><path d="M4 1h7v5H4zM3 9h10v5H3z" fill="#fff"/>',
  quickMenu: '<path d="M4 5h8M4 9h8l-4 4z" stroke="#445" fill="#445" stroke-width="1.5"/>',
  paste: '<path d="M2 3h8v12H2z" fill="#5aa9cc" stroke="#2c7696"/><path d="M6 1h6l3 3v9H6z" fill="#e3f3fa" stroke="#2c7696"/><path d="M8 6h5M8 9h5" stroke="#5aa9cc"/>',
  paste2: '<path d="M1 2h11v13H1z" fill="#eda63a" stroke="#a66b10"/><path d="M6 5h6l3 3v7H6z" fill="#f2f8fb" stroke="#2c7696"/><path d="M4 1h5v3H4z" fill="#777"/>',
  tFlag: '<path d="M4 1v14" stroke="#fff" stroke-width="2"/><path d="M5 2h5v2h5v6H9V9H5z" fill="#fff"/>',
  tBattery: '<path d="M5 3h7v11H5z" fill="none" stroke="#fff" stroke-width="2"/><path d="M7 1h3v1H7zM7 7h3v5H7z" fill="#fff"/>',
  tSignal: '<path d="M1 12h2v3H1zM4 10h2v5H4zM7 7h2v8H7zM10 4h2v11h-2zM13 1h2v14h-2z" fill="#fff"/>',
  tSound: '<path d="M1 6h3l4-4v12l-4-4H1z" fill="#fff"/><path d="M10 5q2 3 0 6M13 3q3 5 0 10" stroke="#e8eef5" fill="none"/>',

  orb: [30, 30, 32, '<circle cx="16" cy="16" r="15" fill="#eceee8" stroke="#a4abb4"/><path d="M3 21h26q-3 9-13 10Q6 30 3 21z" fill="#d3dccb"/><path d="M4 20q4-10 9-9 4 2-2 10 8-14 13-10 3 4-4 9-3 3 1 3 5 0 7-6" fill="none" stroke="#3f8537" stroke-width="2"/><path d="M8 22q2-9 7-12" stroke="#143d12" stroke-width="1.5" fill="none"/>'],
  rCreate: [26, 26, 26, tree + chain('#3f9a45')],
  rRemove: [26, 26, 26, tree + chain('#56a35b') + '<path d="M15 3l9 10M25 3L14 13" stroke="#de4b38" stroke-width="2"/>'],
  rProps: [26, 26, 26, '<path d="M3 3h20v21H3z" fill="#e3e8ef" stroke="#bac3cf"/>' + gear(19, 7, '#aab0ba') + '<g transform="translate(-10 9)">' + chain('#a0a6b0') + '</g>'],
  rSpatial: [26, 26, 26, treeRed + '<path d="M5 5h5v3l-3 3-2-3z" fill="#fff" stroke="#2f8ca6" stroke-width="1.5"/>'],
  rManager: [26, 26, 26, treeRed + gear(20, 8, '#3895ab')],
  rNew: [26, 26, 26, treeRed + '<path d="M21 1v10M16 6h10" stroke="#1f7d36" stroke-width="3"/>'],

  win: [30, 30, 32, '<circle cx="16" cy="16" r="15" fill="#2b5d88" stroke="#1d3e5b"/><path d="M3 12q13-14 26 0" fill="#8cb4cf" opacity=".6"/><path d="M8 11q4-3 7-1l-1 6q-4-2-7 0z" fill="#ee5b2f"/><path d="M17 10q4 2 8 0l-1 6q-4 2-8 0z" fill="#8bc43f"/><path d="M6 18q4-2 7 0l-1 6q-4-2-7 0z" fill="#4aa6e0"/><path d="M15 18q4 2 8 0l-1 6q-4 2-8 0z" fill="#fccc3b"/>'],
  ie: [26, 26, 32, '<circle cx="16" cy="17" r="10" fill="none" stroke="#41b3e6" stroke-width="5"/><path d="M8 17h19" stroke="#41b3e6" stroke-width="4"/><path d="M20 20h10v4H20z" fill="#a8bed8"/><path d="M4 30Q-2 25 10 13T29 3q3 3-3 10 1-7-5-6-8 2-14 12-4 7-3 10z" fill="#f2cf3b"/>'],
  files: [26, 26, 32, '<path d="M3 6h10l2-3h13v23H3z" fill="#e8c95e" stroke="#b7923a"/><path d="M3 10h26v15H3z" fill="#f6e697"/><path d="M7 29V19h18v10h-4v-6H11v6z" fill="#76bcdc" stroke="#4a94bb"/><path d="M6 5h5M14 5h6" stroke="#6c9b58" stroke-width="2"/>'],
  media: [22, 22, 32, '<path d="M7 3h22v25H7z" fill="#5aacd0"/><path d="M2 5h22v24H2z" fill="#cfe6f0" stroke="#6aa8c4"/><circle cx="14" cy="17" r="10" fill="#f0852b"/><path d="M11 10l9 7-9 7z" fill="#fff"/>'],
  snip: [26, 26, 32, '<ellipse cx="13" cy="9" rx="11" ry="7" fill="#f5dfe9" stroke="#cc6b92" stroke-width="2"/><path d="M9 5l11 17M21 6l-7 16" stroke="#bcc4cd" stroke-width="3"/><g fill="none" stroke="#4173b0" stroke-width="3"><ellipse cx="14" cy="24" rx="3" ry="4" transform="rotate(30 14 24)"/><ellipse cx="25" cy="25" rx="3" ry="5" transform="rotate(-35 25 25)"/><path d="M16 20l5 1 7-2"/></g>'],
  chrome: [26, 26, 32, '<circle cx="16" cy="16" r="14" fill="#e8432f"/><path d="M4 9l8 13 5 8Q4 31 2 18q0-5 2-9z" fill="#35a852"/><path d="M16 10h13q6 18-12 20l6-12z" fill="#fbc91c"/><circle cx="16" cy="16" r="6" fill="#4285e8" stroke="#fff" stroke-width="2"/>'],
  firefox: [26, 26, 32, '<circle cx="17" cy="15" r="13" fill="#24529b"/><path d="M17 3q8 1 9 7l-6 4-6-3z" fill="#58a9dc"/><path d="M4 5q2 3 6 3l5 2-3 4q2 7 9 5 7-2 7-9l-1-4q6 8 1 16-6 9-16 7T2 17Q1 9 4 5z" fill="#ee7418"/><path d="M2 17q3 10 14 10 9-1 13-8-3 11-13 11T2 17z" fill="#fbba27"/>'],
  paint: [26, 26, 32, '<path d="M16 6Q28 7 28 17q-1 9-8 8-3-2-6 1Q3 31 2 21 3 8 16 6z" fill="#eef0ee" stroke="#99a7ae"/><circle cx="9" cy="15" r="3" fill="#d25955"/><circle cx="16" cy="11" r="2" fill="#58aad3"/><circle cx="9" cy="22" r="2" fill="#4c76bd"/><circle cx="22" cy="20" r="3" fill="#7bc25b"/><path d="M31 2L18 24" stroke="#c69a60" stroke-width="3"/>'],
  skype: [26, 26, 32, '<circle cx="11" cy="11" r="9" fill="#17a9df"/><circle cx="21" cy="21" r="9" fill="#17a9df"/><circle cx="16" cy="16" r="12" fill="#17a9df"/><path d="M21 11q-5-4-9-1-2 4 3 5 7 1 6 5-3 5-10 1" stroke="#fff" stroke-width="3" fill="none"/><path d="M22 19q0 7 8 10-2-10-8-10z" fill="#e0f2a8"/>'],
  ppt: [26, 26, 32, '<path d="M4 3h20l2 3v20H4z" fill="#e9a48c" stroke="#c9522b"/><path d="M7 8h23v20H7z" fill="#fbeee8" stroke="#c9522b"/><path d="M10 12h17v12H10z" fill="#cf4a22"/><path d="M17 15h-5v6h5M12 18h4M25 15q-5-1-5 3t5 3M22 18h3" stroke="#fff" stroke-width="2" fill="none"/>'],
  flower: [26, 26, 32, '<g fill="#3f74c4" stroke="#1b3264" stroke-width="2"><circle cx="16" cy="6" r="5"/><circle cx="25" cy="11" r="5"/><circle cx="25" cy="21" r="5"/><circle cx="16" cy="26" r="5"/><circle cx="7" cy="21" r="5"/><circle cx="7" cy="11" r="5"/></g><circle cx="16" cy="16" r="5" fill="#1d3a78"/><circle cx="16" cy="16" r="2" fill="#cfe0f6"/>'],
  vulcanBig: [26, 26, 32, '<path d="M25 3h5v26h-5z" fill="#e8f3ee" stroke="#5b8a6a"/><path d="M3 3h22v26H3z" fill="#1f8b38"/><path d="M7 11q1-7 4-6t0 5q3-6 6-4t3 4" stroke="#9bd89e" fill="none"/><path d="M12 18q-7-1-7 3 3 4 7 1M13 17l4 8 6-10" stroke="#fff" stroke-width="3" fill="none"/>'],
  ganttBig: [24, 24, 32, '<path d="M25 3h5v26h-5z" fill="#5aa6c0"/><path d="M3 3h22v26H3z" fill="#1f8b38"/><path d="M7 10q1-6 4-5t0 4q3-5 6-3" stroke="#9bd89e" fill="none"/><path d="M7 14h4v3h4v4h4v4h3" stroke="#e0f6e2" stroke-width="2" fill="none"/>'],
};

// smaller sizes for a few icons that sit inside text or buttons
const sizes = { plus: 9, minus: 9, restore: 8, capMin: 10, capMax: 10, capClose: 11, pin: 9, vulcan: 13, sheet: 13, info: 11, maxGrey: 9, quickMenu: 9, paste: 14, paste2: 14, explorer: 12, saveBlue: 14 };

function draw(name) {
  const icon = icons[name];
  if (Array.isArray(icon)) {
    return `<svg width="${icon[0]}" height="${icon[1]}" viewBox="0 0 ${icon[2]} ${icon[2]}" overflow="visible">${icon[3]}</svg>`;
  }
  const size = sizes[name] || 12;
  return `<svg width="${size}" height="${size}" viewBox="0 0 16 16">${icon}</svg>`;
}

// explorer tree: depth, handle, icon, text
const nodes = [
  [0, '', 'folder', 'C:\\Users\\humberto.ugar'],
  [1, 'plus', 'folderBox', 'Block Models'],
  [1, 'minus', 'folderDark', 'Design Databases'],
  [2, 'minus', 'green', 'demoproyecto.dg', 'strong'],
  [3, '', 'sheets', 'ACCINF', 'strong'],
  [3, '', 'sheets', 'ACCSUP', 'strong'],
  [3, '', 'sheets', 'RAMP', 'strong'],
  [2, 'plus', 'db', 'demoug.dgd.isis'],
  [2, 'plus', 'db', 'recover.dgd.isis'],
  [1, 'plus', 'folderGrid', 'Gdcalc'],
  [1, 'plus', 'folderGrid', 'Grids'],
  [1, 'plus', 'folderDark', 'Images'],
  [1, 'plus', 'folder', 'Import/Export'],
  [1, 'plus', 'folderBox', 'Lava Scripts'],
  [1, 'plus', 'folder', 'Other'],
  [1, 'plus', 'folderDark', 'Plots'],
  [1, 'plus', 'folderGreen', 'Specifications'],
  [1, 'plus', 'folderTri', 'Triangulations'],
  [1, 'plus', 'folderBox', 'User Databases'],
];
document.getElementById('tree').innerHTML = nodes.map(([depth, handle, icon, text, cls]) =>
  `<li class="d${depth} ${cls || ''}">${handle ? `<i data-icon="${handle}"></i>` : ''}<i data-icon="${icon}"></i><span>${text}</span></li>`
).join('');

// activities: name, quantity, bar width
const activities = [
  ['D6685LVMH101_05W', '53.64', 8],
  ['D6685LVMH101_06W', '157.22', 22],
  ['D6685LVMH101_07W', '57.51', 8],
  ['D6685LVEW350_02W', '39.75', 6],
  ['D6685LVMH101_00W', '71.95', 10],
  ['D6685LVCD075_01W', '22.50', 3],
  ['D6685LVCD125_01W', '22.50', 3],
  ['D6685LVEW100_01W', '29.89', 4],
  ['D6685LVCD150_01W', '22.50', 3],
  ['D6685LVEW175_01W', '29.89', 4],
  ['D6685LVEW225_01W', '29.89', 4],
  ['D6685LVEW275_01W', '29.89', 4],
  ['D6685LVEW325_01W', '29.89', 4],
  ['D6685LVCD200_01W', '22.50', 3],
  ['D6685LVCD250_01W', '22.50', 3],
  ['D6685LVCD300_01W', '22.50', 3],
  ['D6685LVCD350_01W', '21.76', 3],
  ['D6685LVCD500_01W', '22.50', 3],
  ['D6685LVEW525_01W', '29.89', 4],
  ['D6685LVCD550_01W', '22.50', 3],
  ['D6685LVMH101_08W', '57.51', 8],
  ['D6685LVMH101_03W', '50.01', 7],
  ['D6610LVRM101_03W', '457.87', 68],
  ['D6685LVRM101_02W', '119.29', 18],
  ['D6910LVRM101_00W', '1,308.56', 198],
  ['D6910LVRM101_01W', '128.88', 19],
];
document.getElementById('rows').innerHTML = activities.map(([name, qty], i) => {
  const ramp = name.includes('RM101');
  return `<tr class="${ramp ? 'picked' : ''}"><td>${103 + i}</td><td></td><td>${name}</td><td>${ramp ? 'rampa' : 'accsup'}</td><td>${qty}</td></tr>`;
}).join('');
document.getElementById('bars').innerHTML = activities.map((a) =>
  `<span><b style="width:${a[2]}px"></b></span>`
).join('');

// veins of the mine design: start x, y, end x, has a cyan tail
const veins = [
  [527, 350, 550], [525, 352, 541], [524, 356, 557], [528, 359, 552],
  [538, 365, 576, 1], [533, 368, 562], [534, 371, 577, 1], [528, 374, 577], [522, 376, 579, 1],
  [521, 379, 579, 1], [520, 382, 580], [519, 384, 581, 1], [517, 387, 581, 1], [515, 390, 580],
  [513, 393, 578, 1], [511, 396, 575], [509, 399, 573, 1], [507, 402, 568], [505, 405, 566, 1],
  [502, 408, 562], [500, 411, 559, 1], [517, 413, 556], [514, 416, 552, 1], [512, 419, 548],
  [510, 422, 544, 1], [508, 426, 541], [506, 429, 538, 1], [503, 433, 534], [501, 437, 530, 1],
  [499, 440, 530], [498, 443, 524],
];
const seg = (x1, x2, x0, y, c) => `<path d="M${x1} ${y + (x1 - x0) / 14}L${x2} ${y + (x2 - x0) / 14}" stroke="${c}"/>`;
let mine = '<g fill="none" stroke-width="1.5">';
veins.forEach(([a, y, b, cyan], i) => {
  const w = b - a;
  const m = a + w * .4;
  const n = a + w * .6;
  mine += seg(a, m, a, y, i % 3 ? '#c41a12' : '#8b1710');
  mine += seg(a + w * .28, m + 2, a, y, i % 2 ? '#f0b650' : '#d05a2a');
  mine += seg(m, n, a, y, i % 2 ? '#b020a8' : '#5a3fc0');
  mine += seg(n, b, a, y, cyan ? '#63d0e0' : '#7b22b0');
});
mine += '<path stroke="#6ea6f0" stroke-width="2" d="M536 379l24 4M532 385l27 3"/><path stroke="#dfa85a" stroke-width="1.2" d="M478 401l21 5M477 426l28 3M526 349l-11 16 5 17-23 31M550 365h-12l-6 4-7 16-5 5 4 15-4 5-22 33"/></g>';
mine += '<path fill="none" stroke="#7e90d8" stroke-width="1.2" d="M255 357l37-2 20-14 8-5q7-2 15 1l93 24 6 7q1 4 0 6l-20 32q-3 6 6 9l30 4q7-1 13-7l16-14q1-4-6-4-21-1-30 4-8 5-14 19-1 5 4 8l27 8q9 1 14-6"/>';
mine += '<path d="M391 292l9 3-3 1 4 5-1 1-4-5-2 3z" fill="#000" stroke="#ddd"/>';
document.getElementById('model').innerHTML = mine;

// toolbars: icon names, "|" is a separator, "*" a pressed button
document.querySelectorAll('[data-tools]').forEach((bar) => {
  bar.innerHTML = bar.dataset.tools.split(' ').map((name) => {
    if (name === '|') return '<span class="sep"></span>';
    const pressed = name[0] === '*';
    const id = pressed ? name.slice(1) : name;
    return `<button class="tool${pressed ? ' pressed' : ''}" aria-label="${id}">${draw(id)}</button>`;
  }).join('');
});

document.querySelectorAll('[data-icon]').forEach((el) => {
  el.innerHTML = draw(el.dataset.icon);
});
```
